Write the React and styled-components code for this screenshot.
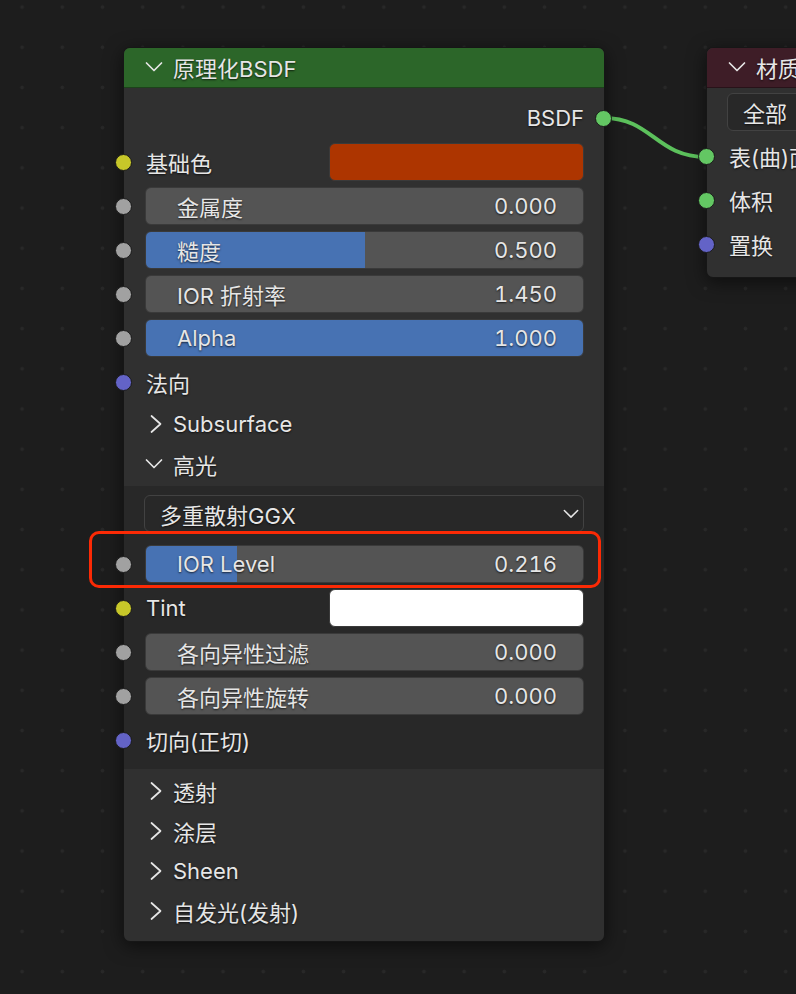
import React from "react";
import styled, { createGlobalStyle } from "styled-components";

const GlobalStyle = createGlobalStyle`
  * {
    box-sizing: border-box;
  }

  body {
    margin: 0;
    background: #1d1d1d;
    color: #e6e6e6;
    font-family: Inter, "Noto Sans CJK SC", "DejaVu Sans", sans-serif;
    -webkit-font-smoothing: antialiased;
  }
`;

const colors = {
  text: "#e6e6e6",
  node: "#303030",
  panel: "#282828",
  field: "#545454",
  fill: "#4772b3",
  outline: "#3a3a3a",
  sockets: {
    color: "#c7c729",
    float: "#a1a1a1",
    vector: "#6363c7",
    shader: "#63c763"
  }
};

const fontSize = 22;

const Canvas = styled.div`
  position: relative;
  width: 796px;
  height: 994px;
  overflow: hidden;
  background-color: #1d1d1d;
  background-image: radial-gradient(circle, #282828 1.6px, transparent 2.2px);
  background-size: 40.2px 40.2px;
  background-position: 2px -13px;
`;

const Node = styled.section`
  position: absolute;
  left: ${p => p.$x}px;
  top: ${p => p.$y}px;
  width: ${p => p.$w}px;
  background: ${colors.node};
  border: 1px solid #161616;
  border-radius: 7px;
  box-shadow: 0 4px 18px rgba(0, 0, 0, 0.55);
`;

const Header = styled.header`
  height: 40px;
  display: flex;
  align-items: center;
  padding: 0 0 2px 21px;
  background: ${p => p.$color};
  border-bottom: 1px solid rgba(0, 0, 0, 0.35);
  border-radius: 6px 6px 0 0;
  font-size: ${fontSize}px;
  white-space: nowrap;
  text-shadow: 0 1px 2px rgba(0, 0, 0, 0.7);
`;

const Body = styled.div`
  padding: ${p => p.$pad || "8px 0 10px"};
`;

const Row = styled.div`
  position: relative;
  height: ${p => p.$h || 44}px;
  display: flex;
  align-items: center;
  justify-content: ${p => (p.$out ? "flex-end" : "flex-start")};
  padding: 0 20px 0 21px;
  font-size: ${fontSize}px;
  white-space: nowrap;
  text-shadow: 0 1px 2px rgba(0, 0, 0, 0.7);
`;

const Label = styled.span`
  padding-left: 1px;
`;

const Socket = styled.span`
  position: absolute;
  top: 50%;
  ${p => (p.$out ? "right: -8px;" : "left: -9px;")}
  width: 17px;
  height: 17px;
  margin-top: -8.5px;
  border-radius: 50%;
  background: ${p => p.$color};
  border: 1.5px solid #1a1a1a;
`;

const Field = styled.div`
  flex: 1;
  height: 38px;
  display: flex;
  align-items: center;
  justify-content: space-between;
  padding: 0 26px 0 31px;
  border: 1px solid ${colors.outline};
  border-radius: 6px;
  background: linear-gradient(
    to right,
    ${colors.fill} ${p => p.$fill}%,
    ${colors.field} ${p => p.$fill}%
  );
`;

const Value = styled.span`
  font-variant-numeric: tabular-nums;
`;

const Swatch = styled.div`
  margin-left: auto;
  width: 255px;
  height: 38px;
  border-radius: 6px;
  border: 1px solid ${colors.outline};
  background: ${p => p.$color};
`;

const PanelToggle = styled(Row)`
  height: 40px;
`;

const IconSlot = styled.span`
  display: flex;
  align-items: center;
  width: 28px;
  flex-shrink: 0;
  padding-left: ${p => (p.$open ? 0 : 4)}px;
`;

const SubPanel = styled.div`
  margin-top: 2px;
  padding: 9px 0 7px;
  background: ${colors.panel};
`;

const Dropdown = styled.div`
  height: ${p => p.$h || 37}px;
  margin: ${p => p.$margin || "0 20px 10px 20px"};
  display: flex;
  align-items: center;
  justify-content: space-between;
  padding: 0 4px 0 15px;
  border: 1px solid #424242;
  border-radius: 6px;
  background: #282828;
  font-size: ${fontSize}px;
  white-space: nowrap;
  text-shadow: 0 1px 2px rgba(0, 0, 0, 0.7);
`;

const LowerPanels = styled.div`
  margin-top: 2px;
`;

const Link = styled.svg`
  position: absolute;
  left: 0;
  top: 0;
  pointer-events: none;
`;

const Highlight = styled.div`
  position: absolute;
  left: 89px;
  top: 531px;
  width: 512px;
  height: 57px;
  border: 3.5px solid #fc2a05;
  border-radius: 10px;
`;

const Chevron = ({ open, small }) =>
  open ? (
    <svg width={small ? 16 : 18} height="12" viewBox="0 0 18 12" fill="none">
      <path d="M1.5 2 L9 9.5 L16.5 2" stroke="#e6e6e6" strokeWidth="1.7" strokeLinecap="round" strokeLinejoin="round" />
    </svg>
  ) : (
    <svg width="14" height="20" viewBox="0 0 14 20" fill="none">
      <path d="M2.5 2 L11.5 10 L2.5 18" stroke="#e6e6e6" strokeWidth="1.7" strokeLinecap="round" strokeLinejoin="round" />
    </svg>
  );

const ValueRow = ({ label, value, fill = 0 }) => (
  <Row>
    <Socket $color={colors.sockets.float} />
    <Field $fill={fill}>
      <span>{label}</span>
      <Value>{value}</Value>
    </Field>
  </Row>
);

const ColorRow = ({ label, swatch }) => (
  <Row>
    <Socket $color={colors.sockets.color} />
    <Label>{label}</Label>
    <Swatch $color={swatch} />
  </Row>
);

const SocketRow = ({ label, color }) => (
  <Row>
    <Socket $color={color} />
    <Label>{label}</Label>
  </Row>
);

const Toggle = ({ label, open }) => (
  <PanelToggle>
    <IconSlot $open={open}>
      <Chevron open={open} />
    </IconSlot>
    <span>{label}</span>
  </PanelToggle>
);

const App = () => (
  <>
    <GlobalStyle />
    <Canvas>
      <Link width="796" height="994">
        <path
          d="M604 118 C 652 118, 656 157, 706 157"
          stroke="#5cc15c"
          strokeWidth="4"
          fill="none"
        />
      </Link>

      <Node $x={123} $y={47} $w={482}>
        <Header $color="#2c6629">
          <IconSlot $open>
            <Chevron open />
          </IconSlot>
          <span>原理化BSDF</span>
        </Header>
        <Body>
          <Row $out>
            <Label>BSDF</Label>
            <Socket $out $color={colors.sockets.shader} />
          </Row>
          <ColorRow label="基础色" swatch="#ad3500" />
          <ValueRow label="金属度" value="0.000" />
          <ValueRow label="糙度" value="0.500" fill={50} />
          <ValueRow label="IOR 折射率" value="1.450" />
          <ValueRow label="Alpha" value="1.000" fill={100} />
          <SocketRow label="法向" color={colors.sockets.vector} />
          <Toggle label="Subsurface" />
          <Toggle label="高光" open />
          <SubPanel>
            <Dropdown>
              <span>多重散射GGX</span>
              <Chevron open small />
            </Dropdown>
            <ValueRow label="IOR Level" value="0.216" fill={20.8} />
            <ColorRow label="Tint" swatch="#ffffff" />
            <ValueRow label="各向异性过滤" value="0.000" />
            <ValueRow label="各向异性旋转" value="0.000" />
            <SocketRow label="切向(正切)" color={colors.sockets.vector} />
          </SubPanel>
          <LowerPanels>
            <Toggle label="透射" />
            <Toggle label="涂层" />
            <Toggle label="Sheen" />
            <Toggle label="自发光(发射)" />
          </LowerPanels>
        </Body>
      </Node>

      <Node $x={706} $y={47} $w={220}>
        <Header $color="#3e1d27">
          <IconSlot $open>
            <Chevron open />
          </IconSlot>
          <span>材质输出</span>
        </Header>
        <Body $pad="5px 0 11px">
          <Dropdown $h={38} $margin="0 0 3px 20px">
            <span>全部</span>
          </Dropdown>
          <SocketRow label="表(曲)面" color={colors.sockets.shader} />
          <SocketRow label="体积" color={colors.sockets.shader} />
          <SocketRow label="置换" color={colors.sockets.vector} />
        </Body>
      </Node>

      <Highlight />
    </Canvas>
  </>
);

export default App;
